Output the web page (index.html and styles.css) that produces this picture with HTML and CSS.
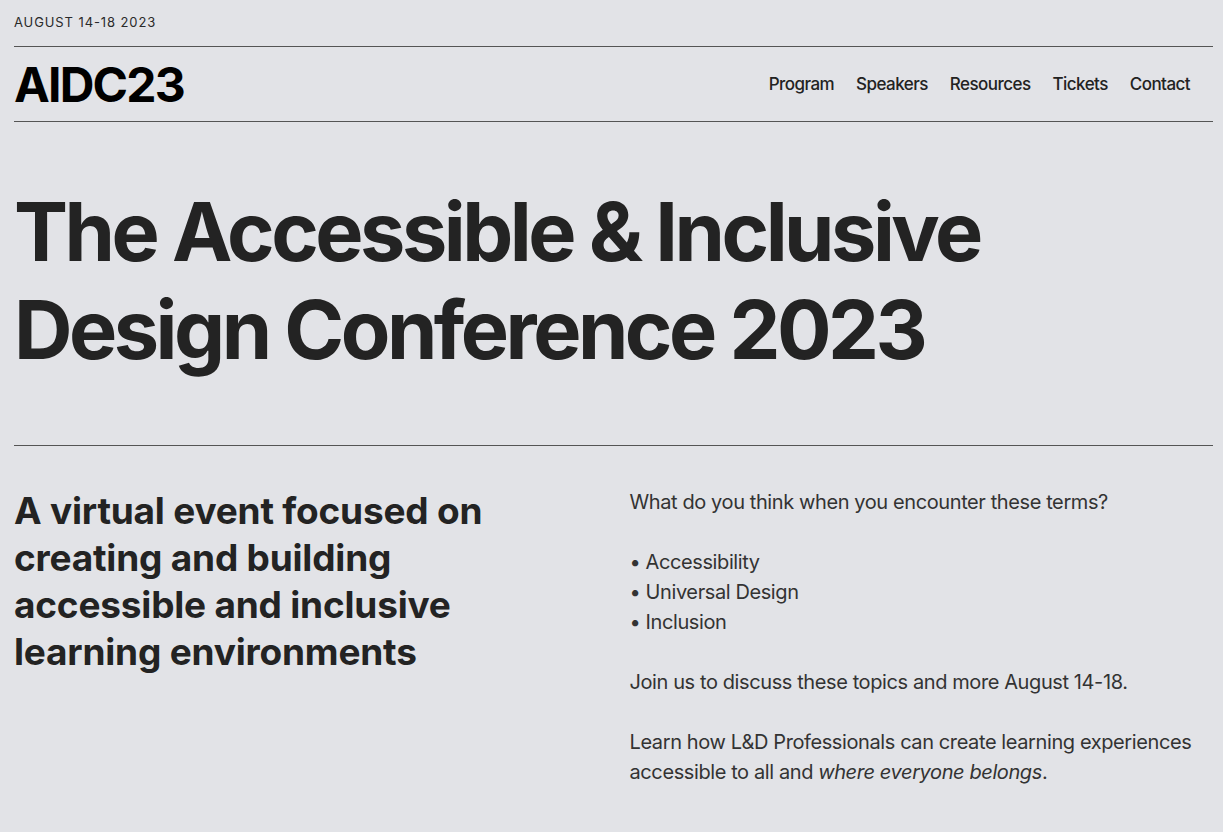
FILE: index.html
```html
<!DOCTYPE html>
<html lang="en">
<head>
<meta charset="utf-8">
<title>AIDC23</title>
<link rel="stylesheet" href="styles.css">
</head>
<body>
<div class="page">
  <div class="dates">AUGUST 14-18 2023</div>
  <header class="masthead">
    <a class="logo" href="#">AIDC23</a>
    <nav class="nav">
      <a href="#">Program</a>
      <a href="#">Speakers</a>
      <a href="#">Resources</a>
      <a href="#">Tickets</a>
      <a href="#">Contact</a>
    </nav>
  </header>
  <section class="hero">
    <h1>The Accessible &amp; Inclusive<br>Design Conference 2023</h1>
  </section>
  <section class="intro">
    <h2>A virtual event focused on creating and building accessible and inclusive learning environments</h2>
    <div class="copy">
      <p>What do you think when you encounter these terms?</p>
      <p>• Accessibility<br>• Universal Design<br>• Inclusion</p>
      <p>Join us to discuss these topics and more August 14-18.</p>
      <p>Learn how L&amp;D Professionals can create learning experiences accessible to all and <em>where everyone belongs</em>.</p>
    </div>
  </section>
</div>
</body>
</html>
```

FILE: styles.css
```css
html, body {
  margin: 0;
  padding: 0;
  background: #e2e3e7;
}
body {
  font-family: Inter, "Noto Sans", sans-serif;
  color: #222;
}
.page {
  padding: 0 10px 0 14px;
}
.dates {
  font-size: 13px;
  letter-spacing: 0.9px;
  color: #2a2a2a;
  height: 47px;
  line-height: 44px;
  box-sizing: border-box;
  border-bottom: 1px solid #555;
}
.masthead {
  display: flex;
  align-items: center;
  justify-content: space-between;
  height: 75px;
  box-sizing: border-box;
  border-bottom: 1px solid #555;
}
.logo {
  font-size: 48px;
  font-weight: 700;
  letter-spacing: -1.8px;
  color: #000;
  text-decoration: none;
  line-height: 1;
  margin-top: 1px;
}
.nav {
  display: flex;
  gap: 22px;
  margin-right: 23px;
  margin-top: -1px;
}
.nav a {
  font-size: 17px;
  font-weight: 500;
  letter-spacing: -0.55px;
  color: #222;
  text-decoration: none;
}
.hero {
  border-bottom: 1px solid #555;
  padding: 61px 0 66px;
}
.hero h1 {
  margin: 0;
  font-size: 81px;
  font-weight: 700;
  line-height: 98px;
  letter-spacing: -3.5px;
  color: #232323;
}
.intro {
  display: grid;
  grid-template-columns: 1fr 1fr;
  column-gap: 32px;
  padding-top: 41px;
}
.intro h2 {
  margin: 0;
  font-size: 37px;
  font-weight: 700;
  line-height: 47px;
  letter-spacing: -0.2px;
  color: #232323;
  max-width: 500px;
}
.copy {
  font-size: 20px;
  line-height: 30px;
  letter-spacing: -0.4px;
  color: #333;
}
.copy p {
  margin: 0 0 30px;
}
```
